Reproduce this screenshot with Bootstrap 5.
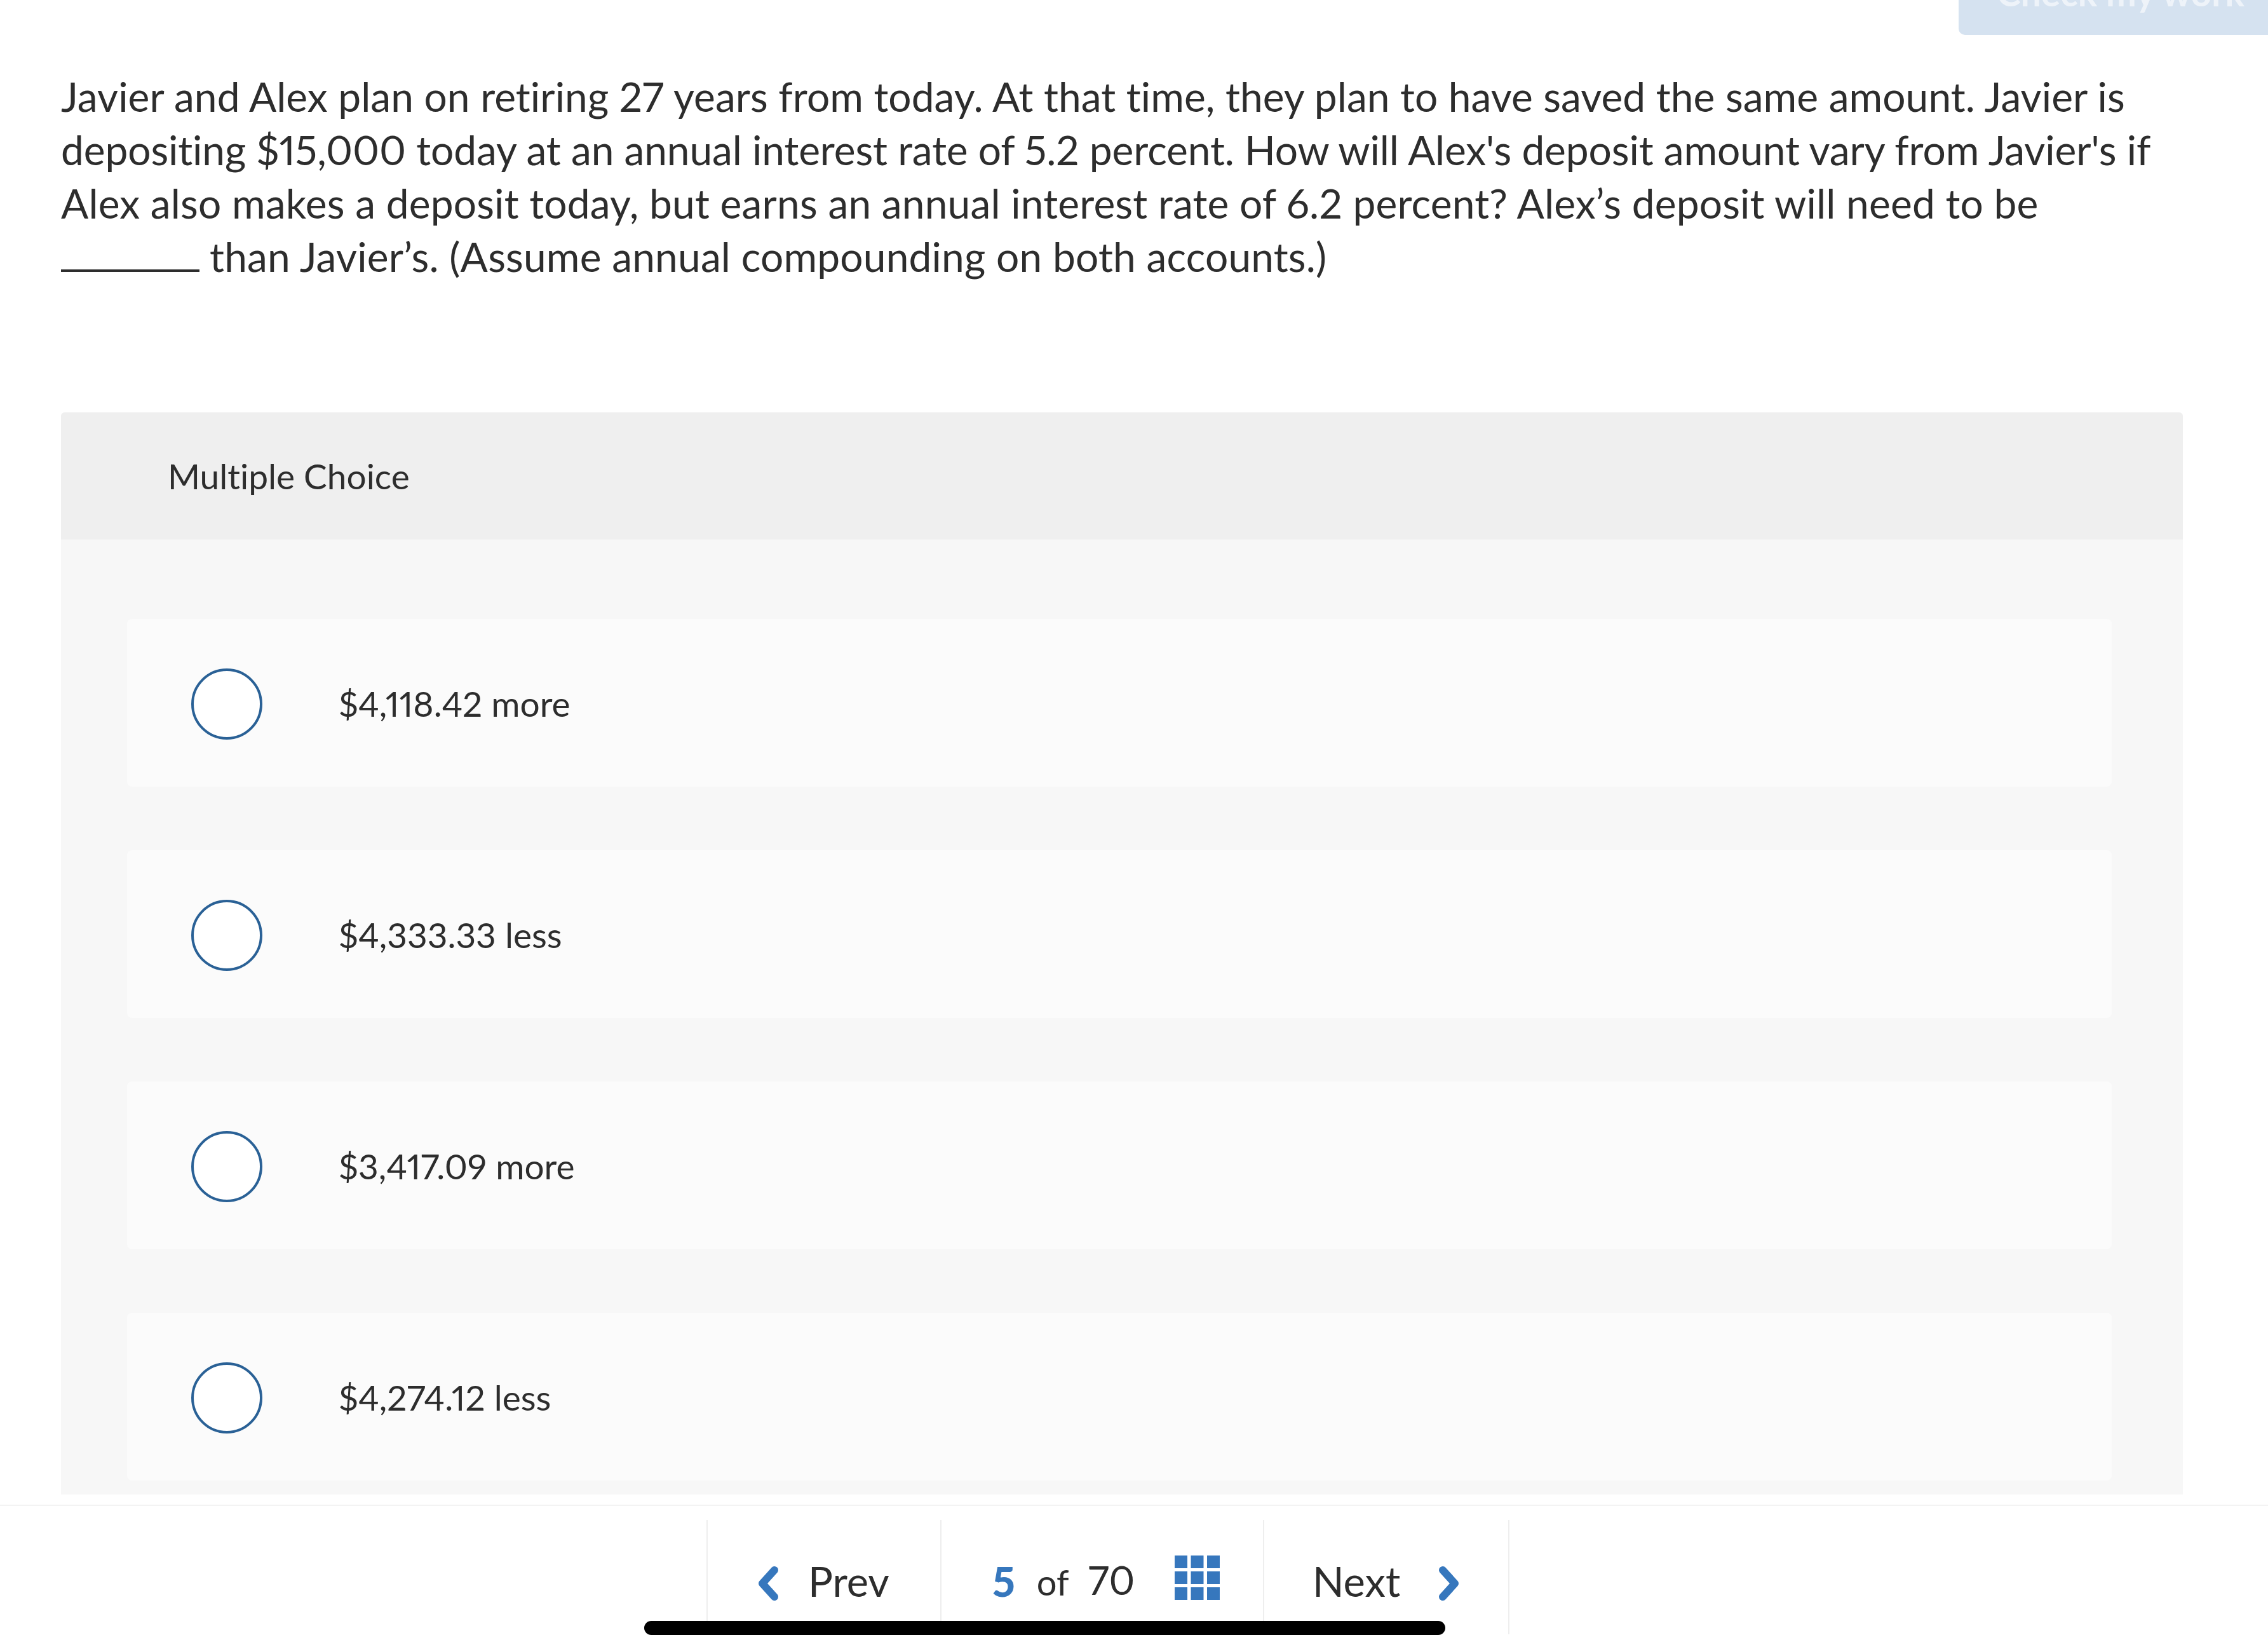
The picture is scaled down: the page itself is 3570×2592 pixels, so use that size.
<!DOCTYPE html>
<html lang="en">
<head>
  <meta charset="UTF-8" />
  <title>Multiple Choice Question</title>
  <link href="https://cdn.jsdelivr.net/npm/bootstrap@5.3.0/dist/css/bootstrap.min.css" rel="stylesheet">
  <style>
    html, body { height: 2592px; overflow: hidden; }
    body { font-family: Lato, "Open Sans", sans-serif; color: #2d2d2d; background: #fff; font-variant-ligatures: none; font-variant-numeric: proportional-nums; }
    .top-strip { height: 55px; }
    .check-btn { width: 487px; height: 55px; background: #d5e2f0; border-radius: 0 0 0 10px; color: #eef3f9; font-size: 57px; font-weight: 700; line-height: 60px; padding-left: 60px; overflow: hidden; white-space: nowrap; }
    .check-btn span { display: block; margin-top: -42px; }
    .q-text { font-size: 64px; line-height: 84px; margin: 55px 0 0 96px; height: 539px; white-space: nowrap; }
    .q-l1 { letter-spacing: .08px; }
    .q-l2 { letter-spacing: -.1px; }
    .q-l3 { letter-spacing: .18px; }
    .q-l4 { letter-spacing: .19px; }
    .blank { display: inline-block; width: 218px; border-bottom: 4px solid #2d2d2d; margin-right: 16px; }
    .mc-panel { margin-left: 96px; width: 3340px; height: 1703px; background: #f7f7f7; border-radius: 6px 6px 0 0; overflow: hidden; }
    .mc-head { height: 200px; background: #efefef; padding-left: 168px; font-size: 55px; }
    .mc-body { padding: 125px 112px 0 104px; gap: 100px; }
    .mc-opt { height: 264px; background: #fbfbfb; border-radius: 8px; padding-left: 101px; padding-top: 3px; font-size: 55px; }
    .mc-radio { width: 112px; height: 112px; border: 4px solid #2a6196; border-radius: 50%; background: #fff; margin-right: 120px; flex-shrink: 0; }
    .pager-bar { margin-top: 16px; border-top: 2px solid #f3f3f3; padding-top: 22px; height: 224px; padding-left: 1112px; }
    .pager-cell { height: 180px; border-left: 2px solid #eee; font-size: 65px; padding-top: 48px; }
    .pager-prev { width: 368px; padding-left: 76px; gap: 42px; }
    .pager-count { width: 508px; padding-left: 80px; }
    .pager-next { width: 388px; padding-left: 76px; gap: 56px; border-right: 2px solid #eee; }
    .pg-chev { margin-top: 24px; }
    .pg-cur { color: #3677bd; font-weight: 900; margin-right: 34px; }
    .pg-of { font-size: 56px; margin-top: 8px; margin-right: 30px; }
    .pg-num { font-size: 62px; }
    .pg-grid { margin-left: 63px; margin-top: 8px; }
    .home-bar { position: absolute; left: 1014px; top: 2551px; width: 1261px; height: 22px; background: #000; border-radius: 11px; }
  </style>
</head>
<body>
  <div class="top-strip d-flex justify-content-end">
    <div class="check-btn"><span>Check my work</span></div>
  </div>

  <p class="q-text"><span class="q-l1">Javier and Alex plan on retiring 27 years from today. At that time, they plan to have saved the same amount. Javier is</span><br><span class="q-l2">depositing $15,000 today at an annual interest rate of 5.2 percent. How will Alex's deposit amount vary from Javier's if</span><br><span class="q-l3">Alex also makes a deposit today, but earns an annual interest rate of 6.2 percent? Alex’s deposit will need to be</span><br><span class="blank"></span><span class="q-l4">than Javier’s. (Assume annual compounding on both accounts.)</span></p>

  <div class="mc-panel">
    <div class="mc-head d-flex align-items-center">Multiple Choice</div>
    <div class="mc-body d-flex flex-column">
      <div class="mc-opt d-flex align-items-center"><span class="mc-radio"></span><span>$4,118.42 more</span></div>
      <div class="mc-opt d-flex align-items-center"><span class="mc-radio"></span><span>$4,333.33 less</span></div>
      <div class="mc-opt d-flex align-items-center"><span class="mc-radio"></span><span>$3,417.09 more</span></div>
      <div class="mc-opt d-flex align-items-center"><span class="mc-radio"></span><span>$4,274.12 less</span></div>
    </div>
  </div>

  <div class="pager-bar d-flex">
    <div class="pager-cell pager-prev d-flex align-items-start">
      <svg class="pg-chev" width="40" height="58" viewBox="0 0 40 58"><path d="M29 7 L10 28 L29 49" fill="none" stroke="#3677bd" stroke-width="12" stroke-linecap="round" stroke-linejoin="round"/></svg>
      <span>Prev</span>
    </div>
    <div class="pager-cell pager-count d-flex align-items-start">
      <span class="pg-cur">5</span><span class="pg-of">of</span><span class="pg-num">70</span>
      <svg class="pg-grid" width="71" height="70" viewBox="0 0 71 70" fill="#3677bd">
        <rect x="0" y="0" width="20" height="20"/><rect x="25.5" y="0" width="20" height="20"/><rect x="51" y="0" width="20" height="20"/>
        <rect x="0" y="25" width="20" height="20"/><rect x="25.5" y="25" width="20" height="20"/><rect x="51" y="25" width="20" height="20"/>
        <rect x="0" y="50" width="20" height="20"/><rect x="25.5" y="50" width="20" height="20"/><rect x="51" y="50" width="20" height="20"/>
      </svg>
    </div>
    <div class="pager-cell pager-next d-flex align-items-start">
      <span>Next</span>
      <svg class="pg-chev" width="40" height="58" viewBox="0 0 40 58"><path d="M11 7 L30 28 L11 49" fill="none" stroke="#3677bd" stroke-width="12" stroke-linecap="round" stroke-linejoin="round"/></svg>
    </div>
  </div>
  <div class="home-bar"></div>
</body>
</html>
